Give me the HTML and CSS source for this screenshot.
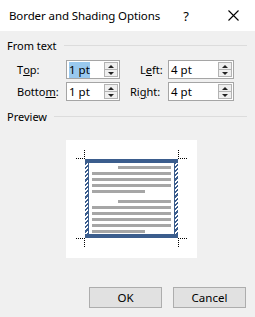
FILE: index.html
```html
<!DOCTYPE html>
<html lang="en">
<head>
    <meta charset="UTF-8">
    <meta name="viewport" content="width=device-width, initial-scale=1.0">
    <title>Border and Shading Options</title>
    <link rel="stylesheet" href="styles.css">
</head>
<body>
    <div class="dialog">
        <div class="titlebar">
            <span class="title">Border and Shading Options</span>
            <span class="help">?</span>
            <span class="close">
                <svg width="11" height="11" viewBox="0 0 11 11">
                    <path d="M0.5 0.5 L10.5 10.5 M10.5 0.5 L0.5 10.5" stroke="#000" stroke-width="1.1" fill="none"/>
                </svg>
            </span>
        </div>

        <div class="section-head">
            <span>From text</span>
            <span class="rule"></span>
        </div>

        <div class="fields">
            <label class="field-label">T<u>o</u>p:</label>
            <div class="spin-input">
                <span class="value"><span class="selected">1 pt</span></span>
                <span class="spinner"><span class="arrow up"></span><span class="arrow down"></span></span>
            </div>
            <label class="field-label">L<u>e</u>ft:</label>
            <div class="spin-input">
                <span class="value">4 pt</span>
                <span class="spinner"><span class="arrow up"></span><span class="arrow down"></span></span>
            </div>

            <label class="field-label">Botto<u>m</u>:</label>
            <div class="spin-input">
                <span class="value">1 pt</span>
                <span class="spinner"><span class="arrow up"></span><span class="arrow down"></span></span>
            </div>
            <label class="field-label">Ri<u>g</u>ht:</label>
            <div class="spin-input">
                <span class="value">4 pt</span>
                <span class="spinner"><span class="arrow up"></span><span class="arrow down"></span></span>
            </div>
        </div>

        <div class="section-head preview-head">
            <span>Preview</span>
            <span class="rule"></span>
        </div>

        <div class="preview">
            <div class="frame">
                <span class="corner tl"></span>
                <span class="corner tr"></span>
                <span class="corner bl"></span>
                <span class="corner br"></span>
                <div class="bar"></div>
                <div class="middle">
                    <div class="hatch"></div>
                    <div class="page">
                        <div class="para">
                            <div class="line first"></div>
                            <div class="line"></div>
                            <div class="line"></div>
                            <div class="line"></div>
                            <div class="line last"></div>
                        </div>
                        <div class="para">
                            <div class="line first"></div>
                            <div class="line"></div>
                            <div class="line"></div>
                            <div class="line"></div>
                            <div class="line"></div>
                            <div class="line last"></div>
                        </div>
                    </div>
                    <div class="hatch"></div>
                </div>
                <div class="bar"></div>
            </div>
        </div>

        <div class="buttons">
            <button class="btn">OK</button>
            <button class="btn">Cancel</button>
        </div>
    </div>
</body>
</html>
```

FILE: styles.css
```css
body {
    margin: 0;
    font-family: "Noto Sans", "Open Sans", sans-serif;
    font-size: 12px;
    color: #000;
    background-color: #f0f0f0;
}
.dialog {
    width: 255px;
    height: 317px;
    background-color: #f0f0f0;
    overflow: hidden;
}
.titlebar {
    display: flex;
    align-items: center;
    height: 31px;
    background-color: #fff;
    padding-left: 9px;
}
.title {
    flex: 1;
    font-size: 11.5px;
    letter-spacing: -0.1px;
}
.help {
    width: 30px;
    text-align: center;
    margin-right: 16px;
    font-size: 13px;
}
.close {
    width: 32px;
    margin-right: 6px;
    display: flex;
    justify-content: center;
}
.section-head {
    display: flex;
    align-items: center;
    height: 14px;
    margin-top: 7px;
    padding: 0 8px 0 7px;
    font-size: 11px;
}
.section-head .rule {
    flex: 1;
    height: 1px;
    margin-left: 7px;
    background-color: #dcdcdc;
}
.fields {
    display: grid;
    grid-template-columns: 49px 64px 38px 66px;
    grid-template-rows: 19px 19px;
    row-gap: 3px;
    margin: 8px 0 0 17px;
}
.fields .field-label:nth-of-type(2) {
    padding-left: 10px;
}
.field-label {
    display: flex;
    align-items: center;
    font-size: 11px;
}
.fields .spin-input:nth-of-type(1),
.fields .spin-input:nth-of-type(3) {
    margin-right: 10px;
}
.spin-input {
    display: flex;
    align-items: center;
    background-color: #fff;
    border: 1px solid #a5a5a5;
    box-sizing: border-box;
    padding: 1px 1px 1px 2px;
}
.spin-input .value {
    flex: 1;
    font-size: 11.5px;
    line-height: 15px;
}
.selected {
    background-color: #99c9ef;
    padding: 0 0 1px 0;
}
.spinner {
    display: flex;
    flex-direction: column;
    width: 14px;
    height: 15px;
    border: 1px solid #b3b3b3;
    box-sizing: border-box;
    background-color: #efefef;
}
.arrow {
    flex: 1;
    display: flex;
    justify-content: center;
    align-items: center;
}
.arrow.up {
    border-bottom: 1px solid #b3b3b3;
}
.arrow::before {
    content: "";
    width: 0;
    height: 0;
    border-left: 3px solid transparent;
    border-right: 3px solid transparent;
}
.arrow.up::before {
    border-bottom: 3px solid #222;
}
.arrow.down::before {
    border-top: 3px solid #222;
}
.preview-head {
    margin-top: 8px;
}
.preview {
    width: 131px;
    height: 118px;
    margin: 17px 0 0 66px;
    background-color: #fff;
    box-sizing: border-box;
    padding: 19px;
}
.frame {
    position: relative;
    display: flex;
    flex-direction: column;
    width: 93px;
    height: 79px;
}
.bar {
    height: 4px;
    background-color: #3b5d8d;
}
.middle {
    flex: 1;
    display: flex;
}
.hatch {
    width: 4px;
    background: repeating-linear-gradient(135deg, #3b5d8d 0, #3b5d8d 1.5px, #fff 1.5px, #fff 3px);
}
.middle .hatch:first-child {
    box-shadow: inset -1px 0 0 #3b5d8d;
}
.middle .hatch:last-child {
    box-shadow: inset 1px 0 0 #3b5d8d;
}
.page {
    flex: 1;
    padding: 3px 3px 0 3px;
    display: flex;
    flex-direction: column;
    gap: 7px;
}
.para {
    display: flex;
    flex-direction: column;
    gap: 3px;
}
.line {
    height: 3px;
    background-color: #a6a6a6;
}
.line.first {
    margin-left: 26px;
}
.line.last {
    width: 53px;
}
.corner {
    position: absolute;
    width: 8px;
    height: 8px;
}
.corner.tl {
    left: -9px;
    top: -9px;
    border-right: 1px dotted #000;
    border-bottom: 1px dotted #000;
}
.corner.tr {
    right: -9px;
    top: -9px;
    border-left: 1px dotted #000;
    border-bottom: 1px dotted #000;
}
.corner.bl {
    left: -9px;
    bottom: -9px;
    border-right: 1px dotted #000;
    border-top: 1px dotted #000;
}
.corner.br {
    right: -9px;
    bottom: -9px;
    border-left: 1px dotted #000;
    border-top: 1px dotted #000;
}
.buttons {
    display: flex;
    justify-content: flex-end;
    gap: 11px;
    margin-top: 29px;
    padding-right: 9px;
}
.btn {
    width: 73px;
    height: 21px;
    font-family: "Noto Sans", "Open Sans", sans-serif;
    font-size: 11.5px;
    color: #000;
    background-color: #e1e1e1;
    border: 1px solid #adadad;
    padding: 0;
}
```
